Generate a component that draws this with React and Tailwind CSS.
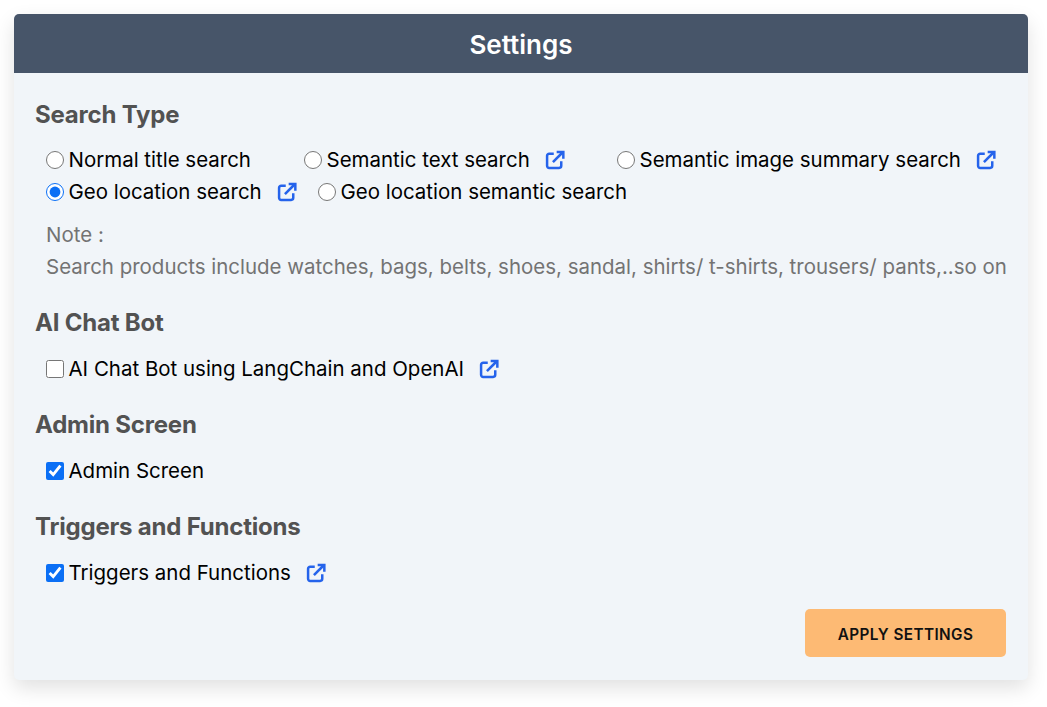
import React from 'react';

const ExternalIcon = ({ className }) => (
  <svg viewBox="0 0 24 24" fill="none" stroke="#2563eb" strokeWidth="3" className={className}>
    <path d="M10.500 4.500H5A2.500 2.500 0 0 0 2.500 7v12A2.500 2.500 0 0 0 5 21.500h12a2.500 2.500 0 0 0 2.500-2.500v-5.500" />
    <path d="M9.500 14.500L21 3" />
    <path d="M14 2.500h8v8" />
  </svg>
);

const Option = ({ type, name, label, checked, link, className = '' }) => (
  <label className={`flex items-center ${className}`}>
    <input
      type={type}
      name={name}
      defaultChecked={checked}
      className="w-[18px] h-[18px] m-0 accent-[#0b6ff5] shrink-0"
    />
    <span className="ml-[4.500px] text-black whitespace-nowrap">{label}</span>
    {link && <ExternalIcon className="w-[20px] h-[20px] ml-[15px]" />}
  </label>
);

const SectionTitle = ({ children }) => (
  <h2 className="text-[24px] leading-[30px] font-bold tracking-[-0.2px] text-[#525252]">{children}</h2>
);

export default function App() {
  return (
    <div className="w-[1047px] h-[707px] bg-white pt-[14px] pl-[14px] font-['Inter',sans-serif] text-[20.480px] leading-[32px]">
      <div className="w-[1014px] h-[666px] rounded-[5px] bg-[#f1f5f9] shadow-[0_8px_20px_rgba(0,0,0,0.12)] overflow-hidden flex flex-col">
        <div className="h-[59px] shrink-0 bg-[#475569] flex items-center justify-center pt-[2px] text-white text-[26px] font-semibold">
          Settings
        </div>
        <div className="flex-1 flex flex-col pt-[27px] pl-[21px] pr-[22px]">
          <SectionTitle>Search Type</SectionTitle>
          <div className="mt-[14px] pl-[11px]">
            <div className="flex">
              <Option type="radio" name="search" label="Normal title search" className="w-[258px]" />
              <Option type="radio" name="search" label="Semantic text search" link className="w-[313px]" />
              <Option type="radio" name="search" label="Semantic image summary search" link />
            </div>
            <div className="flex">
              <Option type="radio" name="search" label="Geo location search" link checked className="w-[272px]" />
              <Option type="radio" name="search" label="Geo location semantic search" />
            </div>
            <div className="mt-[11px] text-[#737373]">Note :</div>
            <div className="text-[#737373] whitespace-nowrap">
              Search products include watches, bags, belts, shoes, sandal, shirts/ t-shirts, trousers/ pants,..so on
            </div>
          </div>
          <div className="mt-[25px]">
            <SectionTitle>AI Chat Bot</SectionTitle>
          </div>
          <div className="mt-[15px] pl-[11px]">
            <Option type="checkbox" label="AI Chat Bot using LangChain and OpenAI" link />
          </div>
          <div className="mt-[25px]">
            <SectionTitle>Admin Screen</SectionTitle>
          </div>
          <div className="mt-[15px] pl-[11px]">
            <Option type="checkbox" label="Admin Screen" checked />
          </div>
          <div className="mt-[25px]">
            <SectionTitle>Triggers and Functions</SectionTitle>
          </div>
          <div className="mt-[15px] pl-[11px]">
            <Option type="checkbox" label="Triggers and Functions" link checked />
          </div>
          <div className="mt-[20px] flex justify-end">
            <button className="w-[201px] h-[48px] rounded-[5px] bg-[#fdba74] pt-[3px] text-[#111] text-[15.300px] font-semibold tracking-[0.4px]">
              APPLY SETTINGS
            </button>
          </div>
        </div>
      </div>
    </div>
  );
}
